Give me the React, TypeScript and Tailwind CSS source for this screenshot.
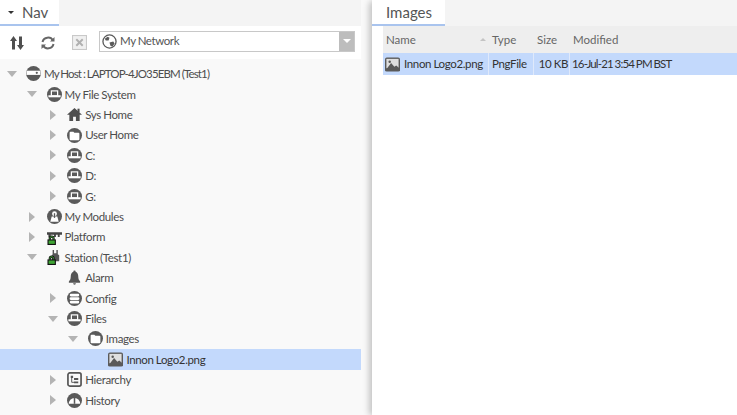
import { ReactNode } from 'react';

function Disc({ children }: { children?: ReactNode }) {
  return (
    <svg viewBox="0 0 16 16" className="h-[15px] w-[15px]">
      <circle cx="8" cy="8" r="8" fill="#5a5a5a" />
      {children}
    </svg>
  );
}

const HostIcon = () => (
  <Disc>
    <rect x="0.5" y="5" width="15" height="4.5" fill="#fff" />
    <circle cx="11.5" cy="7.2" r="1.2" fill="#5a5a5a" />
  </Disc>
);

const DriveIcon = () => (
  <Disc>
    <path d="M4 3.500h8v6H4z" fill="#fff" />
    <path d="M5.300 4.800h5.400v4H5.300z" fill="#5a5a5a" />
    <rect x="1.500" y="8.800" width="13" height="2.200" fill="#fff" />
  </Disc>
);

const FolderIcon = () => (
  <Disc>
    <path d="M2.800 5a1 1 0 0 1 1-1h3l1 1h4.400a1 1 0 0 1 1 1v6a1 1 0 0 1-1 1H3.800a1 1 0 0 1-1-1z" fill="#fff" />
  </Disc>
);

const ConfigIcon = () => (
  <Disc>
    <rect x="3" y="3" width="10" height="2.800" rx="1.200" fill="#fff" />
    <rect x="2.800" y="6.700" width="10.400" height="2.800" rx="1.200" fill="#fff" />
    <rect x="3" y="10.400" width="10" height="2.800" rx="1.200" fill="#fff" />
  </Disc>
);

const ModulesIcon = () => (
  <Disc>
    <circle cx="8" cy="5" r="2.600" fill="#fff" />
    <path d="M3.500 13.500 5 8h6l1.500 5.500z" fill="#fff" />
    <rect x="7.300" y="4.500" width="1.400" height="5" fill="#5a5a5a" />
  </Disc>
);

const HistoryIcon = () => (
  <Disc>
    <path d="M1.800 11.500a6.200 6.200 0 0 1 12.400 0z" fill="#fff" />
    <rect x="7.200" y="4.500" width="1.600" height="7" fill="#5a5a5a" />
  </Disc>
);

const HomeIcon = () => (
  <svg viewBox="0 0 16 16" className="h-[15px] w-[15px]">
    <path d="M8 1 0 8.200h2.500V15h4v-4.500h3V15h4V8.200H16z" fill="#4f4f4f" />
    <rect x="11.200" y="1.800" width="2.200" height="4" fill="#4f4f4f" />
  </svg>
);

const BellIcon = () => (
  <svg viewBox="0 0 16 16" className="h-[15px] w-[15px]">
    <path d="M8 .5a1.200 1.200 0 0 1 1.200 1.400C11.400 2.700 12 4.800 12 7c0 3 1 4.200 2 5.200v1.300H2v-1.300C3 11.200 4 10 4 7c0-2.200.6-4.300 2.800-5.100A1.200 1.200 0 0 1 8 .5z" fill="#555" />
    <path d="M6.500 14.200h3a1.500 1.500 0 0 1-3 0z" fill="#555" />
  </svg>
);

const HierarchyIcon = () => (
  <svg viewBox="0 0 16 16" className="h-[15px] w-[15px]">
    <rect x="1" y="1" width="14" height="14" rx="2" fill="none" stroke="#555" strokeWidth="1.800" />
    <path d="M4 4h2.500v2.500H4zM7.500 6.500H12v2H7.500zM7.500 10H12v2H7.500z" fill="#555" />
    <path d="M5 6v5h2.500" fill="none" stroke="#555" />
  </svg>
);

const ImageIcon = () => (
  <svg viewBox="0 0 16 16" className="h-[15px] w-[15px] shrink-0">
    <rect x="0" y="0.500" width="16" height="15" rx="2" fill="#5a5a5a" />
    <rect x="1.500" y="2" width="13" height="10" fill="#dfdfdf" />
    <path d="M0 15 6.500 6.500l3.500 4 2-1.500 4 3.500V15z" fill="#5a5a5a" />
    <circle cx="5" cy="5" r="1.300" fill="#5a5a5a" />
  </svg>
);

const GreenLock = () => (
  <>
    <path d="M3 10.500V9a2 2 0 0 1 4 0v1.500" fill="none" stroke="#111" strokeWidth="2.400" />
    <path d="M3 10.500V9a2 2 0 0 1 4 0v1.500" fill="none" stroke="#3fa535" strokeWidth="0.900" />
    <path d="M.5 10h9v6h-9z" fill="#111" />
    <path d="M1.700 11.200h6.600v3.600H1.700z" fill="#3fa535" />
  </>
);

const PlatformIcon = () => (
  <svg viewBox="0 0 16 16" className="h-[15px] w-[15px]">
    <path d="M0 2.500h16V5h-2.500v2.500h-2V5H9.500v2.500h-2V5H4v3H1.500V5H0z" fill="#444" />
    <GreenLock />
  </svg>
);

const StationIcon = () => (
  <svg viewBox="0 0 16 16" className="h-[15px] w-[15px]">
    <path d="M6 0h1.500v3.500h2.500V0h1.500v4.500l1.500 1V12H5V6l1-1.500z" fill="#555" />
    <GreenLock />
  </svg>
);

function Arrow({ dir }: { dir?: 'open' | 'closed' }) {
  if (dir === 'open') {
    return (
      <svg viewBox="0 0 10 6" className="h-[6px] w-[10px]">
        <path d="M0 0h10L5 6z" fill="#b4b4b4" />
      </svg>
    );
  }
  if (dir === 'closed') {
    return (
      <svg viewBox="0 0 6 10" className="h-[10px] w-[6px]">
        <path d="M0 0l6 5-6 5z" fill="#b4b4b4" />
      </svg>
    );
  }
  return null;
}

type Row = {
  level: number;
  dir?: 'open' | 'closed';
  icon: ReactNode;
  label: string;
  selected?: boolean;
  tight?: boolean;
};

const rows: Row[] = [
  { level: 0, dir: 'open', icon: <HostIcon />, label: 'My Host : LAPTOP-4JO35EBM (Test1)', tight: true },
  { level: 1, dir: 'open', icon: <DriveIcon />, label: 'My File System' },
  { level: 2, dir: 'closed', icon: <HomeIcon />, label: 'Sys Home' },
  { level: 2, dir: 'closed', icon: <FolderIcon />, label: 'User Home' },
  { level: 2, dir: 'closed', icon: <DriveIcon />, label: 'C:' },
  { level: 2, dir: 'closed', icon: <DriveIcon />, label: 'D:' },
  { level: 2, dir: 'closed', icon: <DriveIcon />, label: 'G:' },
  { level: 1, dir: 'closed', icon: <ModulesIcon />, label: 'My Modules' },
  { level: 1, dir: 'closed', icon: <PlatformIcon />, label: 'Platform' },
  { level: 1, dir: 'open', icon: <StationIcon />, label: 'Station (Test1)' },
  { level: 2, icon: <BellIcon />, label: 'Alarm' },
  { level: 2, dir: 'closed', icon: <ConfigIcon />, label: 'Config' },
  { level: 2, dir: 'open', icon: <DriveIcon />, label: 'Files' },
  { level: 3, dir: 'open', icon: <FolderIcon />, label: 'Images' },
  { level: 4, icon: <ImageIcon />, label: 'Innon Logo2.png', selected: true },
  { level: 2, dir: 'closed', icon: <HierarchyIcon />, label: 'Hierarchy' },
  { level: 2, dir: 'closed', icon: <HistoryIcon />, label: 'History' },
];

function TreeRow({ row }: { row: Row }) {
  return (
    <div className={`flex h-[20.4px] items-center text-[11.5px] ${row.selected ? 'bg-[#c3d9fc] text-[#333]' : 'text-[#4d4d4d]'}`}>
      <div style={{ width: 5 + row.level * 20.6 }} className="shrink-0" />
      <div className="flex w-[13px] shrink-0 justify-center">
        <Arrow dir={row.dir} />
      </div>
      <div className="ml-[8px] flex shrink-0">{row.icon}</div>
      <span className={`ml-[3px] whitespace-nowrap [word-spacing:-0.3px] ${row.tight ? 'tracking-[-0.85px]' : 'tracking-[-0.35px]'}`}>
        {row.label}
      </span>
    </div>
  );
}

export default function App() {
  return (
    <div className="flex h-[415px] w-[737px] overflow-hidden bg-[#f9f9f9] font-['Lato',sans-serif]">
      <div className="flex w-[361px] shrink-0 flex-col">
        <div className="flex h-[26px] bg-[#f4f4f4]">
          <div className="flex w-[59px] items-center gap-[8px] border-b-2 border-[#a9c4ee] bg-white pl-[8px] text-[15px] text-[#555]">
            <span className="h-0 w-0 border-x-[3px] border-t-[3px] border-x-transparent border-t-[#333]" />
            Nav
          </div>
        </div>
        <div className="flex h-[33px] items-center bg-white pl-[10px]">
          <svg viewBox="0 0 14 14" className="h-[14px] w-[14px]">
            <path d="M3.500 0 7 5H5v8.500H2V5H0zM10.500 14 7 9h2V.5h3V9h2z" fill="#4f4f4f" />
          </svg>
          <svg viewBox="0 0 14 14" className="ml-[17px] h-[14px] w-[14px]">
            <path d="M12 4.500A5.700 5.700 0 0 0 1.500 6M2 9.500A5.700 5.700 0 0 0 12.500 8" fill="none" stroke="#666" strokeWidth="2" />
            <path d="M13.500 1v4.500H9zM.5 13V8.500H5z" fill="#666" />
          </svg>
          <svg viewBox="0 0 14 14" className="ml-[17px] h-[15px] w-[15px]">
            <rect x="0.500" y="0.500" width="13" height="13" fill="#f0f0f0" stroke="#c9c9c9" />
            <path d="M4 4l6 6M10 4l-6 6" stroke="#b0b0b0" strokeWidth="1.800" />
          </svg>
          <div className="ml-[12px] mt-[-3px] flex h-[21px] items-center border border-[#c8c8c8] bg-white">
            <div className="flex w-[239px] items-center pl-[2px] text-[11.5px] tracking-[-0.4px] text-[#555] [word-spacing:-0.3px]">
              <svg viewBox="0 0 16 16" className="h-[15px] w-[15px]">
                <circle cx="8" cy="8" r="7" fill="#fff" stroke="#5a5a5a" strokeWidth="1.400" />
                <path d="M3 5l3-2 2 1-1 3H4zM8 9l4-1 1.500 2-2.500 3.500-2-1z" fill="#5a5a5a" />
              </svg>
              <span className="ml-[3px]">My Network</span>
            </div>
            <div className="flex h-full w-[15px] items-center justify-center bg-[#bdbdbd]">
              <span className="h-0 w-0 border-x-[4px] border-t-[4px] border-x-transparent border-t-white" />
            </div>
          </div>
        </div>
        <div className="flex-1 pt-[4.7px]">
          {rows.map((r) => (
            <TreeRow key={r.label + r.level} row={r} />
          ))}
        </div>
      </div>
      <div className="w-[11px] shrink-0" />
      <div className="flex flex-1 flex-col rounded-tl-[6px] bg-white shadow-[-3px_0_6px_rgba(0,0,0,0.22)]">
        <div className="flex h-[26px] bg-[#f4f4f4]">
          <div className="flex w-[73px] items-center border-b-2 border-[#a9c4ee] bg-white pl-[14px] text-[15px] text-[#555]">
            Images
          </div>
        </div>
        <div className="ml-[11px] flex h-[27px] items-center bg-[#eeeeee] text-[11.5px] text-[#666]">
          <div className="flex w-[106px] items-center justify-between px-[3px]">
            Name
            <span className="h-0 w-0 border-x-[3px] border-b-[3px] border-x-transparent border-b-[#c4c4c4]" />
          </div>
          <div className="w-[45px] pl-[3px]">Type</div>
          <div className="w-[36px] pl-[3px]">Size</div>
          <div className="pl-[3px]">Modified</div>
        </div>
        <div className="ml-[11px] flex h-[22px] items-center bg-[#c3d9fc] text-[11.5px] tracking-[-0.35px] text-[#333] [word-spacing:-0.3px]">
          <div className="flex h-full w-[106px] items-center border-r border-[#dfe9fb] pl-[2px]">
            <ImageIcon />
            <span className="ml-[4px] whitespace-nowrap">Innon Logo2.png</span>
          </div>
          <div className="flex h-full w-[45px] items-center border-r border-[#dfe9fb] pl-[3px]">PngFile</div>
          <div className="flex h-full w-[36px] items-center justify-end border-r border-[#dfe9fb] pr-[1px]">10 KB</div>
          <div className="whitespace-nowrap pl-[2px] tracking-[-0.85px]">16-Jul-21 3:54 PM BST</div>
        </div>
      </div>
    </div>
  );
}
